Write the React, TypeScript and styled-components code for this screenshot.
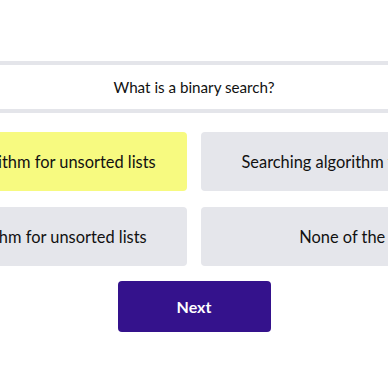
import styled, { createGlobalStyle } from "styled-components";

const Global = createGlobalStyle`
    html, body { margin:0; padding:0; background:#fff; overflow:hidden; }
    body { font-family: Lato, "Noto Sans", sans-serif; color:#111; }
`;

const Page = styled.div`
    width:100%;
    display:flex;
    justify-content:center;
    padding-top:61px;
`;

const Quiz = styled.div`
    width:674px;
    flex-shrink:0;
    display:flex;
    flex-direction:column;
    align-items:center;
`;

const Question = styled.div`
    width:100%;
    height:44px;
    border-top:4px solid #e4e5ea;
    border-bottom:4px solid #e4e5ea;
    display:flex;
    align-items:center;
    justify-content:center;
    font-size:15.2px;
    margin-bottom:19px;
`;

const Options = styled.div`
    width:100%;
    display:grid;
    grid-template-columns:1fr 1fr;
    column-gap:14px;
    row-gap:16px;
`;

const Option = styled.div<{ selected?: boolean }>`
    height:59px;
    border-radius:4px;
    background:${(p) => (p.selected ? "#f7fa80" : "#e5e6eb")};
    display:flex;
    align-items:center;
    justify-content:center;
    font-size:16.4px;
`;

const NextButton = styled.button`
    margin-top:15px;
    width:153px;
    height:51px;
    border:none;
    border-radius:4px;
    background:#34128c;
    color:#fff;
    font-family:inherit;
    font-size:16px;
    font-weight:bold;
`;

const answers = [
    "Searching algorithm for unsorted lists",
    "Searching algorithm for sorted lists",
    "Sorting algorithm for unsorted lists",
    "None of the above",
];

const App = () => {
    return (
        <>
            <Global />
            <Page>
                <Quiz>
                    <Question>What is a binary search?</Question>
                    <Options>
                        {answers.map((a, i) => (
                            <Option key={a} selected={i === 0}>{a}</Option>
                        ))}
                    </Options>
                    <NextButton>Next</NextButton>
                </Quiz>
            </Page>
        </>
    );
};

export default App;
